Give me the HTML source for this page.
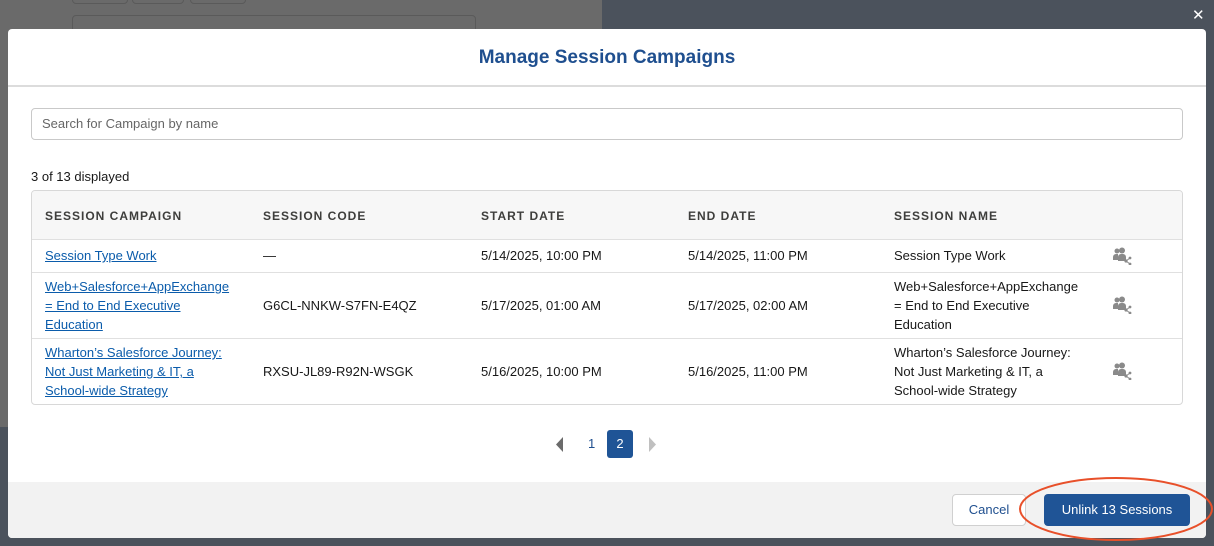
<!DOCTYPE html>
<html><head><style>
*{box-sizing:border-box;margin:0;padding:0}
body{width:1214px;height:546px;position:relative;overflow:hidden;background:#4b525c;font-family:"Liberation Sans",sans-serif;color:#181818}
.bgl{position:absolute;left:0;top:0;width:602px;height:427px;background:#6a6a6a}
.bgl .b{position:absolute;border:1px solid #5a5a5a;border-radius:4px}
.modal{position:absolute;left:8px;top:29px;width:1198px;height:509px;background:#fff;border-radius:4px;overflow:hidden}
.hdr{height:58px;border-bottom:2px solid #dcdcdc;text-align:center;font-size:19px;font-weight:bold;color:#1f4f8f;line-height:58px}
.search{position:absolute;left:23px;top:79px;width:1152px;height:32px;border:1px solid #c9c9c9;border-radius:4px;font-size:13px;color:#666;padding-left:10px;line-height:30px}
.cnt{position:absolute;left:23px;top:140px;font-size:13px}
.tbl{position:absolute;left:23px;top:161px;width:1152px;height:215px;border:1px solid #d8d8d8;border-radius:4px;overflow:hidden}
.row{position:absolute;left:0;width:100%;border-bottom:1px solid #e0e0e0;font-size:13px}
.c{position:absolute;line-height:19px}
.th{background:#f7f7f7;font-size:12px;font-weight:bold;letter-spacing:1px;color:#3e3e3c}
a{color:#0b5cab;text-decoration:underline}
.ic{position:absolute;left:1080px}
.pg{position:absolute;top:402px;font-size:13px}
.foot{position:absolute;left:0;top:453px;width:100%;height:56px;background:#f2f2f2}
.btn{position:absolute;border-radius:4px;font-size:13px;text-align:center}
</style></head><body>
<div class="bgl"><div class="b" style="left:72px;top:-10px;width:56px;height:14px"></div><div class="b" style="left:132px;top:-10px;width:52px;height:14px"></div><div class="b" style="left:190px;top:-10px;width:56px;height:14px"></div><div class="b" style="left:72px;top:15px;width:404px;height:20px"></div></div>
<div style="position:absolute;left:1192px;top:6px;color:#fff;font-size:15px">✕</div>
<div class="modal">
<div class="hdr">Manage Session Campaigns</div>
<div class="search">Search for Campaign by name</div>
<div class="cnt">3 of 13 displayed</div>
<div class="tbl">
<div class="row th" style="top:0;height:49px"><div class="c" style="left:13px;top:16px">SESSION CAMPAIGN</div><div class="c" style="left:231px;top:16px">SESSION CODE</div><div class="c" style="left:449px;top:16px">START DATE</div><div class="c" style="left:656px;top:16px">END DATE</div><div class="c" style="left:862px;top:16px">SESSION NAME</div></div>
<div class="row" style="top:49px;height:33px"><div class="c" style="left:13px;top:6px"><a>Session Type Work</a></div><div class="c" style="left:231px;top:6px">—</div><div class="c" style="left:449px;top:6px">5/14/2025, 10:00 PM</div><div class="c" style="left:656px;top:6px">5/14/2025, 11:00 PM</div><div class="c" style="left:862px;top:6px">Session Type Work</div><svg class="ic" style="top:7px" width="20" height="18" viewBox="0 0 20 18"><g fill="#8a8a8a"><circle cx="5" cy="4" r="2.5"/><circle cx="10" cy="3.5" r="3"/><path d="M1 13v-3a3 3 0 0 1 3-3h2v6zM6 14v-4a3 3 0 0 1 3-3h2a3 3 0 0 1 3 3v4z"/><circle cx="14" cy="14" r="1.6"/><circle cx="18" cy="11" r="1.4"/><circle cx="18" cy="17" r="1.4"/></g><path d="M14 14l4-3M14 14l4 3" stroke="#8a8a8a" stroke-width="1"/></svg></div>
<div class="row" style="top:82px;height:66px"><div class="c" style="left:13px;top:4px"><a>Web+Salesforce+AppExchange<br>= End to End Executive<br>Education</a></div><div class="c" style="left:231px;top:23px">G6CL-NNKW-S7FN-E4QZ</div><div class="c" style="left:449px;top:23px">5/17/2025, 01:00 AM</div><div class="c" style="left:656px;top:23px">5/17/2025, 02:00 AM</div><div class="c" style="left:862px;top:4px">Web+Salesforce+AppExchange<br>= End to End Executive<br>Education</div><svg class="ic" style="top:23px" width="20" height="18" viewBox="0 0 20 18"><g fill="#8a8a8a"><circle cx="5" cy="4" r="2.5"/><circle cx="10" cy="3.5" r="3"/><path d="M1 13v-3a3 3 0 0 1 3-3h2v6zM6 14v-4a3 3 0 0 1 3-3h2a3 3 0 0 1 3 3v4z"/><circle cx="14" cy="14" r="1.6"/><circle cx="18" cy="11" r="1.4"/><circle cx="18" cy="17" r="1.4"/></g><path d="M14 14l4-3M14 14l4 3" stroke="#8a8a8a" stroke-width="1"/></svg></div>
<div class="row" style="top:148px;height:67px;border:0"><div class="c" style="left:13px;top:4px"><a>Wharton’s Salesforce Journey:<br>Not Just Marketing &amp; IT, a<br>School-wide Strategy</a></div><div class="c" style="left:231px;top:23px">RXSU-JL89-R92N-WSGK</div><div class="c" style="left:449px;top:23px">5/16/2025, 10:00 PM</div><div class="c" style="left:656px;top:23px">5/16/2025, 11:00 PM</div><div class="c" style="left:862px;top:4px">Wharton’s Salesforce Journey:<br>Not Just Marketing &amp; IT, a<br>School-wide Strategy</div><svg class="ic" style="top:23px" width="20" height="18" viewBox="0 0 20 18"><g fill="#8a8a8a"><circle cx="5" cy="4" r="2.5"/><circle cx="10" cy="3.5" r="3"/><path d="M1 13v-3a3 3 0 0 1 3-3h2v6zM6 14v-4a3 3 0 0 1 3-3h2a3 3 0 0 1 3 3v4z"/><circle cx="14" cy="14" r="1.6"/><circle cx="18" cy="11" r="1.4"/><circle cx="18" cy="17" r="1.4"/></g><path d="M14 14l4-3M14 14l4 3" stroke="#8a8a8a" stroke-width="1"/></svg></div>
</div>
<svg style="position:absolute;left:547px;top:408px" width="9" height="15"><path d="M8 0L1 7.5 8 15z" fill="#6b6b6b"/></svg>
<div class="pg" style="left:580px;top:407px;color:#1f4f8f">1</div>
<div style="position:absolute;left:599px;top:401px;width:26px;height:28px;background:#1f5496;border-radius:3px;color:#fff;font-size:13px;text-align:center;line-height:28px">2</div>
<svg style="position:absolute;left:640px;top:408px" width="9" height="15"><path d="M1 0L8 7.5 1 15z" fill="#c0c0c0"/></svg>
<div class="foot">
<div class="btn" style="left:944px;top:12px;width:74px;height:32px;border:1px solid #d0d0d0;background:#fff;color:#1f4f8f;line-height:30px">Cancel</div>
<div class="btn" style="left:1036px;top:12px;width:146px;height:32px;background:#1f5496;color:#fff;line-height:32px">Unlink 13 Sessions</div>
</div>
</div>
<svg style="position:absolute;left:1018px;top:476px" width="196" height="66"><ellipse cx="98" cy="33" rx="96" ry="31" fill="none" stroke="#e8502a" stroke-width="2"/></svg>
</body></html>
